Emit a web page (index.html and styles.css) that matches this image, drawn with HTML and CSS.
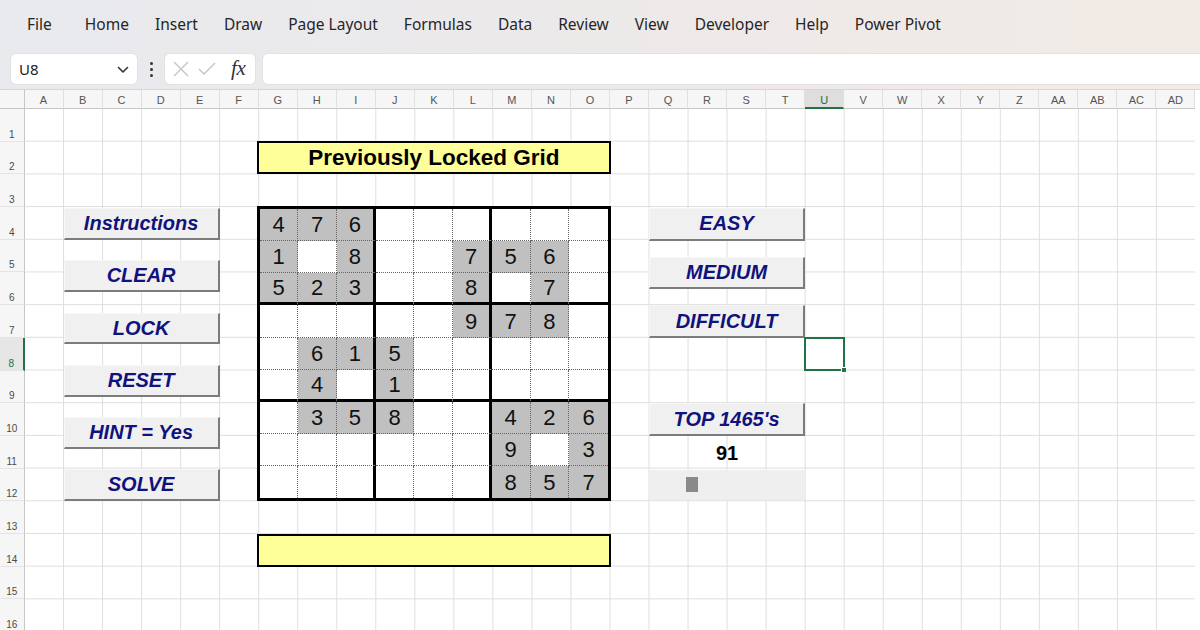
FILE: index.html
```html
<!DOCTYPE html>
<html>
<head>
<meta charset="utf-8">
<link rel="stylesheet" href="styles.css">
</head>
<body>
<div class="app">
  <nav class="ribbon">
    <span class="tab file">File</span>
    <span class="tab">Home</span>
    <span class="tab">Insert</span>
    <span class="tab">Draw</span>
    <span class="tab">Page Layout</span>
    <span class="tab">Formulas</span>
    <span class="tab">Data</span>
    <span class="tab">Review</span>
    <span class="tab">View</span>
    <span class="tab">Developer</span>
    <span class="tab">Help</span>
    <span class="tab">Power Pivot</span>
  </nav>
  <div class="fbar">
    <div class="namebox">
      <span class="ref">U8</span>
      <svg class="chev" width="12" height="8" viewBox="0 0 12 8"><path d="M1.5 1.5 L6 6 L10.5 1.5" fill="none" stroke="#333" stroke-width="1.6" stroke-linecap="round" stroke-linejoin="round"/></svg>
    </div>
    <div class="vdots"><i></i><i></i><i></i></div>
    <div class="fxbox">
      <svg width="18" height="18" viewBox="0 0 18 18"><path d="M2 2 L16 16 M16 2 L2 16" stroke="#c4c4c4" stroke-width="1.4" fill="none"/></svg>
      <svg width="20" height="18" viewBox="0 0 20 18"><path d="M2 9 L7 14 L18 3" stroke="#c4c4c4" stroke-width="1.4" fill="none"/></svg>
      <span class="fx">fx</span>
    </div>
    <div class="finput"></div>
  </div>
  <div class="sheet">
    <div class="corner"></div>
    <div class="ch">A</div><div class="ch">B</div><div class="ch">C</div><div class="ch">D</div><div class="ch">E</div>
    <div class="ch">F</div><div class="ch">G</div><div class="ch">H</div><div class="ch">I</div><div class="ch">J</div>
    <div class="ch">K</div><div class="ch">L</div><div class="ch">M</div><div class="ch">N</div><div class="ch">O</div>
    <div class="ch">P</div><div class="ch">Q</div><div class="ch">R</div><div class="ch">S</div><div class="ch">T</div>
    <div class="ch sel">U</div><div class="ch">V</div><div class="ch">W</div><div class="ch">X</div><div class="ch">Y</div>
    <div class="ch">Z</div><div class="ch">AA</div><div class="ch">AB</div><div class="ch">AC</div><div class="ch">AD</div>

    <div class="rh">1</div><div class="rh">2</div><div class="rh">3</div><div class="rh">4</div>
    <div class="rh">5</div><div class="rh">6</div><div class="rh">7</div><div class="rh sel">8</div>
    <div class="rh">9</div><div class="rh">10</div><div class="rh">11</div><div class="rh">12</div>
    <div class="rh">13</div><div class="rh">14</div><div class="rh">15</div><div class="rh">16</div>

    <div class="cells"></div>

    <div class="title">Previously Locked Grid</div>

    <div class="leftbtns">
      <div class="btn">Instructions</div>
      <div class="btn">CLEAR</div>
      <div class="btn">LOCK</div>
      <div class="btn">RESET</div>
      <div class="btn">HINT = Yes</div>
      <div class="btn">SOLVE</div>
    </div>

    <div class="sudoku">
      <div class="c g">4</div><div class="c g">7</div><div class="c g">6</div><div class="c"></div><div class="c"></div><div class="c"></div><div class="c"></div><div class="c"></div><div class="c"></div>
      <div class="c g">1</div><div class="c"></div><div class="c g">8</div><div class="c"></div><div class="c"></div><div class="c g">7</div><div class="c g">5</div><div class="c g">6</div><div class="c"></div>
      <div class="c g">5</div><div class="c g">2</div><div class="c g">3</div><div class="c"></div><div class="c"></div><div class="c g">8</div><div class="c"></div><div class="c g">7</div><div class="c"></div>
      <div class="c"></div><div class="c"></div><div class="c"></div><div class="c"></div><div class="c"></div><div class="c g">9</div><div class="c g">7</div><div class="c g">8</div><div class="c"></div>
      <div class="c"></div><div class="c g">6</div><div class="c g">1</div><div class="c g">5</div><div class="c"></div><div class="c"></div><div class="c"></div><div class="c"></div><div class="c"></div>
      <div class="c"></div><div class="c g">4</div><div class="c"></div><div class="c g">1</div><div class="c"></div><div class="c"></div><div class="c"></div><div class="c"></div><div class="c"></div>
      <div class="c"></div><div class="c g">3</div><div class="c g">5</div><div class="c g">8</div><div class="c"></div><div class="c"></div><div class="c g">4</div><div class="c g">2</div><div class="c g">6</div>
      <div class="c"></div><div class="c"></div><div class="c"></div><div class="c"></div><div class="c"></div><div class="c"></div><div class="c g">9</div><div class="c"></div><div class="c g">3</div>
      <div class="c"></div><div class="c"></div><div class="c"></div><div class="c"></div><div class="c"></div><div class="c"></div><div class="c g">8</div><div class="c g">5</div><div class="c g">7</div>
    </div>

    <div class="rightbtns">
      <div class="btn">EASY</div>
      <div class="btn">MEDIUM</div>
      <div class="btn">DIFFICULT</div>
    </div>
    <div class="btn topbtn">TOP 1465's</div>
    <div class="score">91</div>
    <div class="progress"><span class="pbar"></span></div>

    <div class="selcell"><span class="handle"></span></div>

    <div class="msgbox"></div>
  </div>
</div>
</body>
</html>
```
FILE: styles.css
```css
* { box-sizing: border-box; }
html, body { margin: 0; padding: 0; }
body {
  width: 1200px;
  height: 630px;
  overflow: hidden;
  background: #ffffff;
  font-family: "Liberation Sans", Arial, sans-serif;
}
.app {
  width: 1200px;
  height: 630px;
  overflow: hidden;
  display: flex;
  flex-direction: column;
}
.ribbon {
  height: 48px;
  flex: none;
  display: flex;
  align-items: center;
  padding-left: 27px;
  gap: 26px;
  font-family: "Noto Sans", "Open Sans", sans-serif;
  font-size: 15.5px;
  color: #262626;
  background: linear-gradient(to right, #e8eaee 0%, #ece9ea 45%, #f2ebe5 100%);
}
.tab { white-space: nowrap; }
.tab.file { margin-right: 7px; }

.fbar {
  height: 42px;
  flex: none;
  display: flex;
  align-items: flex-start;
  padding: 6px 0 0 11px;
  background: linear-gradient(to right, #e8eaee 0%, #ece9ea 45%, #f2ebe5 100%);
  border-bottom: 1px solid #d6d6d6;
}
.namebox {
  width: 126px;
  height: 30px;
  background: #fff;
  border-radius: 5px;
  box-shadow: 0 0 0 1px #e2e2e2;
  display: flex;
  align-items: center;
  justify-content: space-between;
  padding: 0 8px 0 8px;
}
.ref {
  font-family: "Noto Sans", "Open Sans", sans-serif;
  font-size: 15px;
  color: #222;
}
.chev { margin-top: 2px; }
.vdots {
  width: 28px;
  height: 30px;
  display: flex;
  flex-direction: column;
  align-items: center;
  justify-content: center;
  gap: 3px;
}
.vdots i {
  display: block;
  width: 3px;
  height: 3px;
  border-radius: 50%;
  background: #333;
}
.fxbox {
  width: 90px;
  height: 30px;
  background: #fff;
  border-radius: 5px;
  box-shadow: 0 0 0 1px #e2e2e2;
  display: flex;
  align-items: center;
  padding-left: 7px;
  gap: 7px;
}
.fx {
  font-family: "Liberation Serif", "DejaVu Serif", serif;
  font-style: italic;
  font-size: 21px;
  color: #333;
  margin-left: 7px;
  letter-spacing: -0.3px;
  margin-top: -2px;
}
.finput {
  margin-left: 8px;
  flex: 1;
  height: 30px;
  background: #fff;
  border-radius: 5px 0 0 5px;
  box-shadow: 0 0 0 1px #e2e2e2;
}

.sheet {
  flex: none;
  display: grid;
  grid-template-columns: 24.5px repeat(30, 39.04px);
  grid-template-rows: 19px repeat(16, 32.7px);
  position: relative;
}
.corner {
  grid-column: 1;
  grid-row: 1;
  background: #f6f6f6;
  border-right: 1px solid #c6c6c6;
  border-bottom: 1px solid #c6c6c6;
}
.ch {
  grid-row: 1;
  background: #f6f6f6;
  border-right: 1px solid #e0e0e0;
  border-bottom: 1px solid #c6c6c6;
  display: flex;
  align-items: center;
  justify-content: center;
  font-size: 11px;
  color: #555;
  padding-top: 2px;
}
.ch.sel {
  background: #dedede;
  border-bottom: 2px solid #217346;
  color: #1e6b41;
}
.rh {
  grid-column: 1;
  background: #f6f6f6;
  border-right: 1px solid #c6c6c6;
  border-bottom: 1px solid #e4e4e4;
  display: flex;
  align-items: flex-end;
  justify-content: center;
  padding-bottom: 1px;
  font-size: 10px;
  color: #4a4a4a;
}
.rh.sel {
  background: #e6e6e6;
  border-right: 2px solid #217346;
  color: #1e6b41;
}
.cells {
  grid-column: 2 / -1;
  grid-row: 2 / -1;
  background-image:
    linear-gradient(to right, transparent 38px, #dedede 38px),
    linear-gradient(to bottom, transparent 31.7px, #dedede 31.7px);
  background-size: 39.04px 100%, 100% 32.7px;
}

.title {
  grid-column: 8 / 17;
  grid-row: 3;
  margin: -1px -1px 0 -2px;
  background: #ffff99;
  border: 2px solid #000;
  display: flex;
  align-items: center;
  justify-content: center;
  font-weight: bold;
  font-size: 22.5px;
  color: #000;
  padding-top: 1px;
}
.msgbox {
  grid-column: 8 / 17;
  grid-row: 15;
  margin: 0 -1px 0 -2px;
  background: #ffff99;
  border: 2px solid #000;
}

.btn {
  background: #f0f0f0;
  border-top: 1px solid #f7f7f7;
  border-left: 1px solid #f7f7f7;
  border-right: 2px solid #7c7c7c;
  border-bottom: 2px solid #7c7c7c;
  display: flex;
  align-items: center;
  justify-content: center;
  font-weight: bold;
  font-style: italic;
  font-size: 20px;
  color: #12127d;
  white-space: nowrap;
}
.leftbtns {
  grid-column: 3 / 7;
  grid-row: 5 / 14;
  display: flex;
  flex-direction: column;
  gap: 20.4px;
  padding-top: 1px;
}
.leftbtns .btn { height: 32px; }
.rightbtns {
  grid-column: 18 / 22;
  grid-row: 5 / 9;
  display: flex;
  flex-direction: column;
  gap: 16px;
  padding-top: 1px;
}
.rightbtns .btn { height: 33px; }
.topbtn {
  grid-column: 18 / 22;
  grid-row: 11;
}
.score {
  grid-column: 18 / 22;
  grid-row: 12;
  display: flex;
  align-items: center;
  justify-content: center;
  font-weight: bold;
  font-size: 20px;
  color: #000;
  padding-top: 2px;
}
.progress {
  grid-column: 18 / 22;
  grid-row: 13;
  margin: 1px 0 1px 0;
  background: #efefef;
  display: flex;
  align-items: center;
  padding-left: 37px;
}
.pbar {
  display: block;
  width: 12px;
  height: 15px;
  background: #8a8a8a;
}

.sudoku {
  grid-column: 8 / 17;
  grid-row: 5 / 14;
  margin: -1px -1px 0 -2px;
  border: 3px solid #000;
  display: grid;
  grid-template-columns: repeat(9, 1fr);
  grid-template-rows: repeat(9, 1fr);
  background: #fff;
}
.c {
  border-right: 1px dotted #666;
  border-bottom: 1px dotted #666;
  display: flex;
  align-items: center;
  justify-content: center;
  font-size: 22px;
  color: #111;
  padding-top: 1px;
}
.c.g { background: #c0c0c0; }
.c:nth-child(9n+3), .c:nth-child(9n+6) { border-right: 3px solid #000; }
.c:nth-child(9n) { border-right: none; }
.c:nth-child(n+19):nth-child(-n+27),
.c:nth-child(n+46):nth-child(-n+54) { border-bottom: 3px solid #000; }
.c:nth-child(n+73) { border-bottom: none; }

.selcell {
  grid-column: 22;
  grid-row: 9;
  margin: -1px -1px 0 -1px;
  border: 2px solid #217346;
  position: relative;
}
.handle {
  position: absolute;
  right: -4px;
  bottom: -4px;
  width: 6px;
  height: 6px;
  background: #217346;
  border: 1px solid #fff;
}
```
